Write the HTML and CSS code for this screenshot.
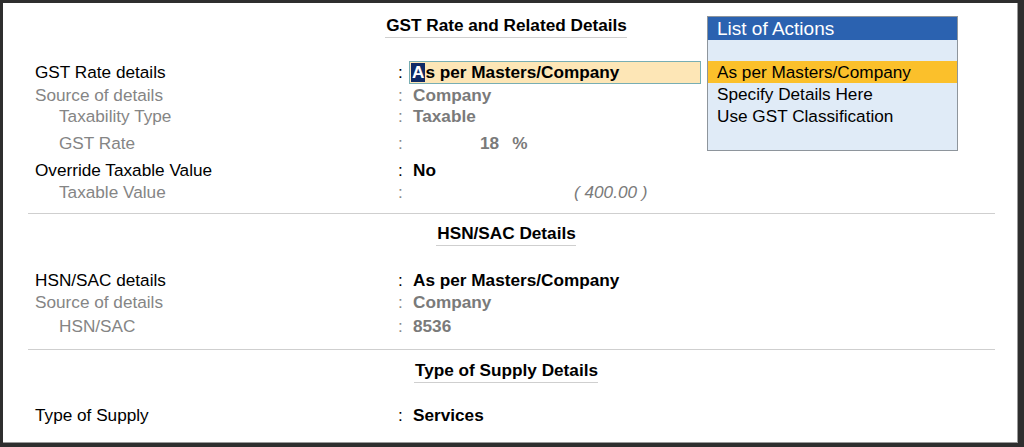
FILE: index.html
```html
<!DOCTYPE html>
<html>
<head>
<meta charset="utf-8">
<link rel="stylesheet" href="styles.css">
</head>
<body>
<div class="frame">
  <section class="sec sec-gst">
    <div class="head-wrap"><h2 class="head">GST Rate and Related Details</h2></div>
    <div class="row h23 first">
      <span class="lbl">GST Rate details</span><span class="colon">:</span>
      <span class="val"><span class="field"><span class="cursor">A</span>s per Masters/Company</span></span>
    </div>
    <div class="row h22 dim">
      <span class="lbl">Source of details</span><span class="colon">:</span><span class="val">Company</span>
    </div>
    <div class="row h21 dim">
      <span class="lbl ind">Taxability Type</span><span class="colon">:</span><span class="val">Taxable</span>
    </div>
    <div class="row h32 dim">
      <span class="lbl ind">GST Rate</span><span class="colon">:</span><span class="val"><span class="num">18</span><span class="pct">%</span></span>
    </div>
    <div class="row h22">
      <span class="lbl">Override Taxable Value</span><span class="colon">:</span><span class="val">No</span>
    </div>
    <div class="row h22 dim">
      <span class="lbl ind">Taxable Value</span><span class="colon">:</span><span class="val"><span class="amt">( 400.00 )</span></span>
    </div>
  </section>
  <hr class="sep sep1">
  <section class="sec sec-hsn">
    <div class="head-wrap"><h2 class="head">HSN/SAC Details</h2></div>
    <div class="row h22 first2">
      <span class="lbl">HSN/SAC details</span><span class="colon">:</span><span class="val">As per Masters/Company</span>
    </div>
    <div class="row h22 dim">
      <span class="lbl">Source of details</span><span class="colon">:</span><span class="val">Company</span>
    </div>
    <div class="row h27 dim">
      <span class="lbl ind">HSN/SAC</span><span class="colon">:</span><span class="val">8536</span>
    </div>
  </section>
  <hr class="sep sep2">
  <section class="sec sec-supply">
    <div class="head-wrap"><h2 class="head">Type of Supply Details</h2></div>
    <div class="row h22 first3">
      <span class="lbl">Type of Supply</span><span class="colon">:</span><span class="val">Services</span>
    </div>
  </section>

  <div class="popup">
    <div class="popup-title">List of Actions</div>
    <ul class="popup-list">
      <li class="popup-item active">As per Masters/Company</li>
      <li class="popup-item">Specify Details Here</li>
      <li class="popup-item">Use GST Classification</li>
    </ul>
  </div>
</div>
</body>
</html>
```

FILE: styles.css
```css
* { box-sizing: border-box; }
html, body { margin: 0; padding: 0; background: #2b2b2b; }
body {
  font-family: "Liberation Sans", Arial, sans-serif;
  font-size: 17.2px;
  color: #000;
  width: 1024px;
  height: 447px;
  overflow: hidden;
}
.frame {
  position: relative;
  width: 1024px;
  height: 447px;
  background: #fff;
  border-style: solid;
  border-color: #2e2e2e;
  border-width: 3px 6px 4px 3px;
  box-shadow: inset -1px -1px 0 #9a9a9a;
}
.sec { display: flex; flex-direction: column; }
.head-wrap {
  display: flex;
  justify-content: center;
  padding-right: 9px;
}
.head {
  margin: 0;
  font-size: 17.2px;
  font-weight: bold;
  line-height: 20px;
  padding: 0 0 2px 1px;
  border-bottom: 1px solid #cfcfcf;
}
.sec-gst .head-wrap { margin-top: 12px; }
.row {
  display: grid;
  grid-template-columns: 362px 16px 1fr;
  align-items: center;
  padding-left: 32px;
  white-space: nowrap;
}
.h21 { height: 21px; }
.h22 { height: 22px; }
.h23 { height: 23px; }
.h27 { height: 27px; }
.h32 { height: 32px; }
.lbl { color: #000; }
.ind { padding-left: 24px; }
.colon { color: #000; padding-left: 1px; }
.val { font-weight: bold; color: #000; }
.dim .lbl { color: #858585; }
.dim .colon { color: #8a8a8a; }
.dim .val { color: #7a7a7a; }
.first { margin-top: 23px; }
.field {
  display: flex;
  align-items: center;
  margin-left: -4px;
  width: 292px;
  height: 23px;
  padding-left: 1px;
  background: #fde6b6;
  border: 1px solid #78aeb3;
}
.cursor {
  display: inline-block;
  background: #0f2a66;
  color: #fff;
  padding: 0 1px 0 1px;
  line-height: 19px;
}
.num { display: inline-block; margin-left: 67px; }
.pct { display: inline-block; margin-left: 13px; }
.amt {
  display: inline-block;
  margin-left: 161px;
  font-weight: normal;
  font-style: italic;
  color: #7a7a7a;
}
.sep {
  margin: 0 23px 0 25px;
  border: 0;
  border-top: 1px solid #cfcfcf;
  height: 0;
}
.sep1 { margin-top: 10px; }
.sec-hsn .head-wrap { margin-top: 9px; }
.first2 { margin-top: 23px; }
.sep2 { margin-top: 9px; }
.sec-supply .head-wrap { margin-top: 10px; }
.first3 { margin-top: 21px; }

.popup {
  position: absolute;
  left: 704px;
  top: 13px;
  width: 251px;
  height: 135px;
  background: #e0ebf7;
  border: 1px solid #8e959c;
}
.popup-title {
  background: #2b62b0;
  color: #fff;
  font-size: 19px;
  line-height: 23px;
  height: 23px;
  padding-left: 9px;
}
.popup-list {
  list-style: none;
  margin: 21px 0 0 0;
  padding: 0;
}
.popup-item {
  height: 22px;
  line-height: 22px;
  padding-left: 9px;
}
.popup-item.active { background: #fbc02b; }
```
